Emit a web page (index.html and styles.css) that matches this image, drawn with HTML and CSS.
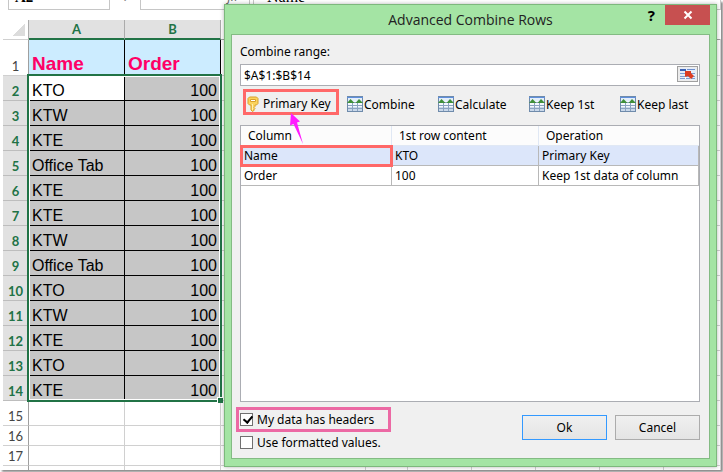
FILE: index.html
```html
<!DOCTYPE html>
<html lang="en">

<head>
	<meta charset="utf-8">
	<title>Advanced Combine Rows</title>
	<link rel="stylesheet" href="styles.css">
</head>

<body>
	<div class="window">
		<div class="formula-bar">
			<div class="name-box"><b>A2</b></div>
			<div class="dots">:</div>
			<div class="fx-box"><span>✕</span><span>✓</span><span class="fx">fx</span></div>
			<div class="formula">Name</div>
		</div>

		<div class="sheet-wrap">
			<table class="sheet">
				<colgroup>
					<col class="col-num"><col class="col-ab"><col class="col-ab"><col class="col-c"><col class="col-d">
					<col class="col-e"><col class="col-e"><col class="col-e"><col class="col-e"><col>
				</colgroup>
				<thead>
					<tr><th class="corner"></th><th class="picked">A</th><th class="picked">B</th><th></th><th></th><th></th><th></th><th></th><th></th><th></th></tr>
				</thead>
				<tbody id="rows"></tbody>
			</table>
			<div class="selection"><i></i></div>
		</div>

		<div class="dialog">
			<div class="titlebar">
				<h1>Advanced Combine Rows</h1>
				<button class="help" type="button">?</button>
				<button class="close" type="button" aria-label="Close"><svg width="10" height="10" viewBox="0 0 10 10"><path d="M1.5 1.5L8.5 8.5M8.5 1.5L1.5 8.5" stroke="#fff" stroke-width="2"/></svg></button>
			</div>

			<div class="panel">
				<label class="range-label" for="range">Combine range:</label>
				<div class="range">
					<input id="range" type="text" value="$A$1:$B$14">
					<button type="button" aria-label="Select range">
						<svg width="16" height="12" viewBox="0 0 16 12">
							<rect width="16" height="12" fill="#e6edf8"/>
							<path d="M0 1h6v2H0z" fill="#3b62b5"/>
							<path d="M7 1h8v1H7z" fill="#6d8fce"/>
							<path d="M0 5.5h15M0 8.5h15M0 10.500h15" stroke="#7f9dd0" fill="none"/>
							<path d="M5.500 3v8M10.500 3v8" stroke="#fff" fill="none"/>
							<path d="M5 3h6v2l3 3-3 3-3-3-3 1z" fill="#dc3c22"/>
						</svg>
					</button>
				</div>

				<div class="tools">
					<button class="primary" type="button">
						<svg width="12" height="16" viewBox="0 0 12 16">
							<path d="M2.500 1h7L11 2.500v5L9.500 9H8v1.500L7 11.500l1 1L7 13.500l.500 .500L5.500 15.500 4 14V9H2.500L1 7.500v-5z" fill="#fbd35c" stroke="#d9a02b"/>
							<path d="M3.500 3.500h5v2h-5z" fill="#fff" stroke="#d9a02b"/>
							<path d="M5.500 8v6" stroke="#fff0b0"/>
						</svg>Primary Key</button>
					<button type="button"><svg width="16" height="16"><use href="#grid-icon"/></svg>Combine</button>
					<button type="button"><svg width="16" height="16"><use href="#grid-icon"/></svg>Calculate</button>
					<button type="button"><svg width="16" height="16"><use href="#grid-icon"/></svg>Keep 1st</button>
					<button type="button"><svg width="16" height="16"><use href="#grid-icon"/></svg>Keep last</button>
				</div>

				<div class="list">
					<table>
						<thead>
							<tr><th class="c1">Column</th><th class="c2">1st row content</th><th>Operation</th></tr>
						</thead>
						<tbody>
							<tr class="current"><td class="marked">Name</td><td>KTO</td><td>Primary Key</td></tr>
							<tr><td>Order</td><td>100</td><td>Keep 1st data of column</td></tr>
						</tbody>
					</table>
				</div>

				<div class="footer">
					<div class="options">
						<label class="option boxed"><input type="checkbox" checked>My data has headers</label>
						<label class="option"><input type="checkbox">Use formatted values.</label>
					</div>
					<button class="btn ok" type="button">Ok</button>
					<button class="btn" type="button">Cancel</button>
				</div>
			</div>

			<svg class="arrow" width="16" height="32" viewBox="0 0 16 32"><path d="M2 0L11 8.500 8 9.500 14 31 4.500 11 1 12.500z" fill="#ff1cff"/></svg>
		</div>
	</div>

	<svg class="defs" width="0" height="0">
		<symbol id="grid-icon" viewBox="0 0 16 16">
			<rect x=".5" y=".5" width="15" height="15" fill="#f4f8fd" stroke="#6f8bab"/>
			<path d="M1 1h14v4H1z" fill="#e4eefb"/>
			<path d="M0 1.500h16" stroke="#5e8fdc"/>
			<path d="M1 11h14v4H1z" fill="#c9d8ea"/>
			<path d="M1 6.500h14M1 9.500h14M1 12.500h14M5.500 6v9M10.500 6v9" stroke="#8ba3c0"/>
			<path d="M0 7l3.500-4L7.500 7zM8.500 7l3.500-4L16 7z" fill="#3f8f3a"/>
		</symbol>
	</svg>

	<script>
		var names = ["KTO", "KTW", "KTE", "Office Tab", "KTE", "KTE", "KTW", "Office Tab", "KTO", "KTW", "KTE", "KTO", "KTE"];
		var blank = "<td></td>".repeat(7);
		var html = '<tr class="head"><th>1</th><td>Name</td><td>Order</td>' + blank + '</tr>';

		names.forEach(function (name, i) {
			html += '<tr class="data"><th>' + (i + 2) + '</th><td>' + name + '</td><td class="num">100</td>' + blank + '</tr>';
		});

		// empty rows below the data
		html += '<tr class="tall"><th>15</th><td></td><td></td>' + blank + '</tr>';
		html += '<tr><th>16</th><td></td><td></td>' + blank + '</tr>';
		html += '<tr><th>17</th><td></td><td></td>' + blank + '</tr>';
		html += '<tr><th></th><td></td><td></td>' + blank + '</tr>';
		document.getElementById("rows").innerHTML = html;
	</script>
</body>

</html>
```

FILE: styles.css
```css
* {
	box-sizing: border-box;
}

body {
	margin: 0;
	height: 100vh;
	padding: 0 2px 2px 0;
	overflow: hidden;
	background: #fff;
	font-family: "Noto Sans", sans-serif;
	font-size: 12px;
	color: #000;
}

button, input {
	font: inherit;
	color: inherit;
}

button {
	display: flex;
	align-items: center;
	padding: 0;
	border: 0;
	background: none;
}

.window {
	position: relative;
	height: 100%;
	background: #fff;
	box-shadow: 2px 2px 2px #8c8c8c;
}

.defs {
	position: absolute;
}

/* formula bar, scrolled half out of view */
.formula-bar {
	display: flex;
	height: 10px;
	margin-bottom: 10px;
	padding-left: 8px;
	overflow: hidden;
	line-height: 12px;
}

.formula-bar div {
	display: flex;
	align-items: flex-end;
	border: 1px solid #c6c6c6;
	border-top: 0;
}

.formula-bar .name-box {
	width: 102px;
	padding: 0 6px 4px;
	font: bold 15px/16px "Liberation Serif", serif;
}

.formula-bar .dots {
	width: 30px;
	justify-content: center;
	border: 0;
	padding-bottom: 7px;
	color: #888;
}

.formula-bar .fx-box {
	width: 110px;
	padding: 0 12px 6px;
	justify-content: space-between;
	color: #bbb;
}

.formula-bar .fx {
	font-style: italic;
	color: #666;
}

.formula-bar .formula {
	flex: 1;
	margin-left: 3px;
	padding: 0 13px 4px;
	font: 16px/16px "Liberation Serif", serif;
}

/* spreadsheet */
.sheet-wrap {
	position: relative;
	height: calc(100% - 20px);
	margin-left: 3px;
	overflow: hidden;
}

.sheet {
	width: 100%;
	table-layout: fixed;
	border-spacing: 0;
	font: 16px/18px "Liberation Sans", Arial, sans-serif;
}

.col-num { width: 26px; }
.col-ab { width: 96px; }
.col-c { width: 145px; }
.col-d { width: 42px; }
.col-e { width: 64px; }

.sheet th,
.sheet td {
	height: 20px;
	padding: 0 3px;
	border-right: 1px solid #d0d0d0;
	border-bottom: 1px solid #d0d0d0;
	text-align: left;
	vertical-align: bottom;
	white-space: nowrap;
}

.sheet th {
	padding: 0;
	font: 13px/18px Lato, sans-serif;
	text-align: center;
	color: #444;
}

.sheet thead th {
	border-right-color: #fff;
	border-bottom-color: #9f9f9f;
}

.sheet thead .picked {
	background: #e1e1e1;
	border-right-color: #ababab;
	border-bottom: 2px solid #217346;
	font-weight: bold;
	color: #217346;
}

.sheet thead .corner {
	background: linear-gradient(135deg, transparent 50%, #dcdcdc 50%) 10px 4px / 12px 12px no-repeat;
	border-right-color: #ababab;
	border-bottom-color: #d0d0d0;
}

.sheet tbody th {
	border-right-color: #9f9f9f;
}

.sheet .head td {
	height: 36px;
}

.sheet .head td:nth-child(2),
.sheet .head td:nth-child(3) {
	background: #ccecff;
	border-color: #000;
	padding-bottom: 2px;
	font-weight: bold;
	font-size: 19px;
	color: #ff0066;
}

.sheet .data td,
.sheet .tall td {
	height: 25px;
}

.sheet .data th {
	background: #e1e1e1;
	border-bottom-color: #bdbdbd;
	font-weight: bold;
	color: #217346;
}

.sheet .data td:nth-child(2),
.sheet .data td:nth-child(3) {
	background: #c6c6c6;
	border-color: #000;
}

.sheet .data:nth-child(2) td:nth-child(2) {
	background: #fff;
}

.sheet .data .num {
	text-align: right;
}

.selection {
	position: absolute;
	left: 24px;
	top: 54px;
	width: 195px;
	height: 328px;
	border: 2px solid #217346;
	box-shadow: inset 0 0 0 1px #fff;
}

.selection i {
	position: absolute;
	right: -3px;
	bottom: -3px;
	width: 6px;
	height: 6px;
	border: 1px solid #fff;
	border-width: 1px 0 0 1px;
	background: #217346;
}

/* dialog */
.dialog {
	position: absolute;
	left: 224px;
	top: 4px;
	right: 4px;
	bottom: 3px;
	display: flex;
	flex-direction: column;
	padding: 0 6px 7px;
	background: #a4e4a4;
	border: 1px solid #7db87d;
	box-shadow: 0 0 4px rgba(0, 0, 0, 0.3);
}

.titlebar {
	display: flex;
	position: relative;
	height: 29px;
	justify-content: center;
}

.titlebar h1 {
	margin: 0;
	font-family: "Open Sans", sans-serif;
	font-size: 14px;
	font-weight: normal;
	line-height: 29px;
	color: #222;
}

.titlebar .help {
	position: absolute;
	right: 55px;
	top: 0;
	height: 20px;
	font-size: 15px;
	font-weight: bold;
}

.titlebar .close {
	position: absolute;
	right: 0;
	top: 0;
	width: 45px;
	height: 20px;
	justify-content: center;
	background: #c75050;
}

.panel {
	flex: 1;
	display: flex;
	flex-direction: column;
	padding: 8px 9px 0 8px;
	background: #f0f0f0;
	border: 1px solid #83bb83;
}

.range-label {
	line-height: 18px;
	margin-bottom: 3px;
}

.range {
	display: flex;
	height: 22px;
	margin-bottom: 3px;
	padding: 1px;
	background: #fff;
	border: 1px solid #abadb3;
}

.range input {
	flex: 1;
	min-width: 0;
	padding: 0 2px;
	border: 0;
	background: none;
	outline: none;
}

.range button {
	width: 21px;
	height: 16px;
	justify-content: center;
	background: #ececec;
	border: 1px solid #a0a0a0;
}

.tools {
	display: flex;
	height: 26px;
	margin: 0 0 10px 3px;
}

.tools button {
	flex: none;
	width: 91px;
	padding-top: 4px;
	gap: 1px;
	white-space: nowrap;
}

.tools button:last-child {
	width: auto;
}

.tools .primary {
	width: 96px;
	margin-right: 8px;
	padding: 3px 0 0 1px;
	gap: 4px;
	border: 3px solid #ff6868;
}

.list {
	flex: 1;
	background: #fff;
	border: 1px solid #abadb3;
}

.list table {
	width: 100%;
	table-layout: fixed;
	border-spacing: 0;
}

.list .c1 { width: 151px; }
.list .c2 { width: 147px; }

.list th,
.list td {
	height: 20px;
	padding: 1px 3px 0;
	border-right: 1px solid #b8b8b8;
	border-bottom: 1px solid #b8b8b8;
	line-height: 18px;
	text-align: left;
}

.list th {
	padding: 1px 7px 0;
	border-color: #e0e8f4;
	background: #fcfcfc;
	font-weight: normal;
}

.list th:last-child {
	border-right: 0;
}

.list .current {
	background: #dce6fa;
}

.list .marked {
	outline: 3px solid #ff6868;
	outline-offset: -2px;
}

.footer {
	display: flex;
	height: 56px;
	padding-top: 5px;
	gap: 8px;
}

.options {
	flex: 1;
	margin-left: -4px;
}

.option {
	display: flex;
	align-items: center;
	width: 155px;
	height: 20px;
	padding-left: 4px;
	gap: 4px;
	white-space: nowrap;
}

.option.boxed {
	height: 25px;
	padding: 0 0 1px 1px;
	border: 3px solid #ec69a4;
}

.option input {
	appearance: none;
	width: 13px;
	height: 13px;
	margin: 0;
	background: #fff;
	border: 1px solid #707070;
}

.option input:checked::before {
	content: "";
	display: block;
	width: 4px;
	height: 7px;
	margin: 0 0 0 4px;
	border: solid #000;
	border-width: 0 2px 2px 0;
	transform: rotate(40deg);
}

.btn {
	width: 85px;
	height: 25px;
	margin-top: 8px;
	justify-content: center;
	background: linear-gradient(#f0f0f0, #e4e4e4);
	border: 1px solid #acacac;
}

.btn.ok {
	border-color: #3399ff;
}

.arrow {
	position: absolute;
	left: 64px;
	top: 108px;
}
```
